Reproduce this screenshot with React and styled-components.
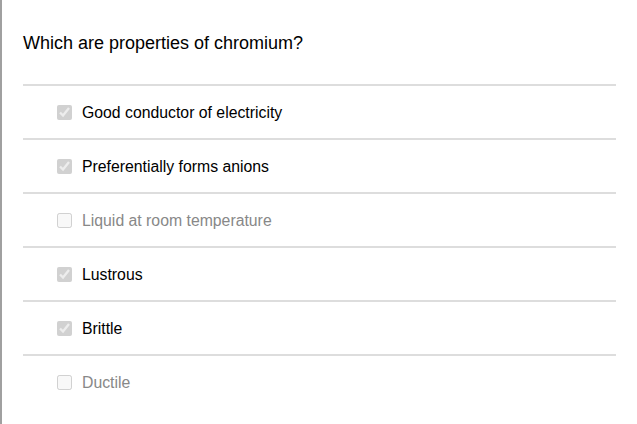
import React from "react";
import styled, { createGlobalStyle } from "styled-components";

const GlobalStyle = createGlobalStyle`
  html, body {
    margin: 0;
    padding: 0;
    background: #fff;
  }
  body {
    font-family: "Liberation Sans", Arial, sans-serif;
  }
`;

const options = [
  { label: "Good conductor of electricity", checked: true },
  { label: "Preferentially forms anions", checked: true },
  { label: "Liquid at room temperature", checked: false },
  { label: "Lustrous", checked: true },
  { label: "Brittle", checked: true },
  { label: "Ductile", checked: false },
];

const App = () => {
  return (
    <Page>
      <GlobalStyle />
      <Question>Which are properties of chromium?</Question>
      <List>
        {options.map((o) => (
          <Option key={o.label}>
            <Box type="checkbox" checked={o.checked} disabled readOnly />
            <Label $checked={o.checked}>{o.label}</Label>
          </Option>
        ))}
      </List>
    </Page>
  );
};

const Page = styled.div`
  box-sizing: border-box;
  width: 637px;
  height: 424px;
  border-left: 2px solid #a0a0a0;
  padding: 0 21px 0 21px;
`;

const Question = styled.h2`
  margin: 0;
  padding: 33px 0 31px;
  font-size: 18px;
  font-weight: normal;
  line-height: 20px;
  color: #000;
`;

const List = styled.ul`
  list-style: none;
  margin: 0;
  padding: 0;
`;

const Option = styled.li`
  display: flex;
  align-items: center;
  height: 52px;
  border-top: 2px solid #dddddd;
  padding-left: 34px;
`;

const Box = styled.input`
  width: 15px;
  height: 15px;
  margin: 0 10px 0 0;
`;

const Label = styled.span`
  padding-top: 2px;
  font-size: 15.8px;
  color: ${(p) => (p.$checked ? "#000" : "#888")};
`;

export default App;
